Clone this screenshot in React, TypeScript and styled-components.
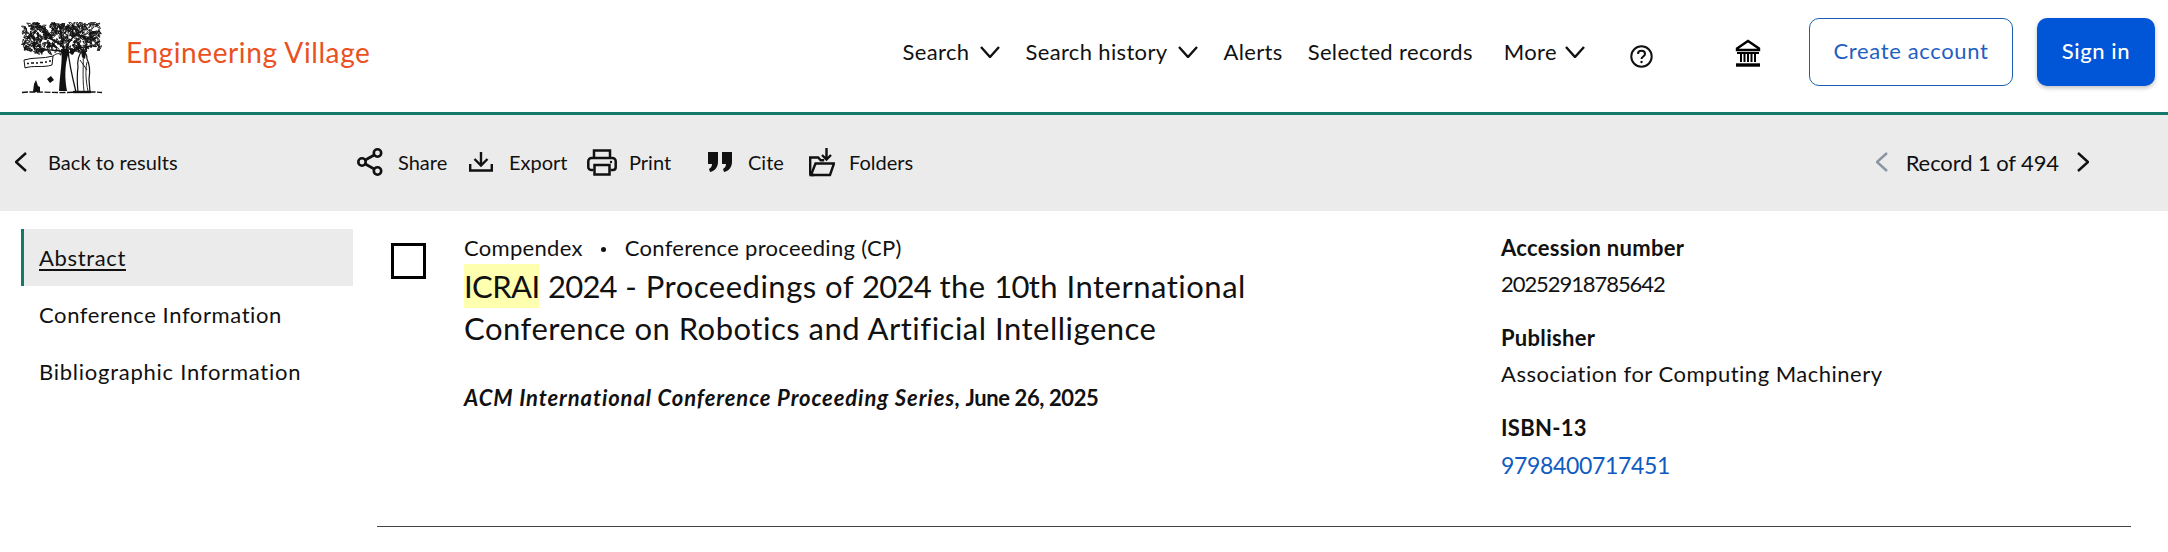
import React from "react";
import styled, { createGlobalStyle } from "styled-components";

const Global = createGlobalStyle`
  html, body { margin: 0; padding: 0; background: #fff; }
  body { font-family: "Lato", "Noto Sans", sans-serif; color: #111; }
  * { box-sizing: border-box; }
`;

const Page = styled.div`width: 2168px; height: 552px; overflow: hidden; background: #fff;`;

const Header = styled.header`
  height: 115px; border-bottom: 3px solid #14796b;
  display: flex; align-items: center; padding: 0 13px 0 21px;
`;
const LogoBox = styled.svg`width: 81px; height: 72px; flex: none; margin-top: 4px;`;
const Brand = styled.a`
  margin-left: 24px; font-size: 28px; letter-spacing: .6px; color: #e9511f; line-height: 1; margin-top: -9px;
`;
const Nav = styled.nav`margin-left: auto; height: 112px; display: flex; align-items: center;`;
const NavItem = styled.a<{ $ml: number; $gap?: number }>`
  margin-left: ${p => p.$ml}px; font-size: 22px; color: #111;
  letter-spacing: .35px; display: flex; align-items: center; gap: ${p => p.$gap ?? 11}px; line-height: 1; margin-top: -8px;
`;
const IconSlot = styled.span<{ $ml: number; $mt?: number }>`
  margin-left: ${p => p.$ml}px; margin-top: ${p => p.$mt ?? 0}px; display: flex;
`;
const Outline = styled.a`
  margin-left: 48px; width: 204px; height: 68px; margin-top: -9px; border: 1px solid #1b5fb5; border-radius: 10px;
  display: flex; align-items: center; justify-content: center; color: #1f5fc0;
  font-size: 22px; letter-spacing: .65px; padding-bottom: 3px;
`;
const Solid = styled.a`
  margin-left: 24px; width: 118px; height: 68px; margin-top: -9px; border-radius: 10px; background: #0056d6; color: #fff;
  box-shadow: 0 2px 4px rgba(0,0,0,.25);
  display: flex; align-items: center; justify-content: center; font-size: 22px; font-weight: 500; letter-spacing: .6px; padding-bottom: 3px;
`;

const Toolbar = styled.div`
  height: 96px; background: #ebebeb; display: flex; align-items: center; padding: 0 79px 2px 15px;
`;
const Back = styled.a`
  display: flex; align-items: center; gap: 21px; font-size: 20px; letter-spacing: .05px; width: 342px; flex: none;
`;
const Tool = styled.a<{ $w: number; $gap: number }>`
  display: flex; align-items: center; gap: ${p => p.$gap}px; width: ${p => p.$w}px; flex: none;
  font-size: 20px; letter-spacing: 0;
`;
const Pager = styled.div`
  margin-left: auto; display: flex; align-items: center; gap: 18px; font-size: 22px; letter-spacing: -.1px;
`;

const Main = styled.main`display: flex; align-items: flex-start; padding: 18px 0 0 21px;`;
const Side = styled.aside`width: 332px; flex: none; display: flex; flex-direction: column;`;
const SideItem = styled.a<{ $active?: boolean; $track: number }>`
  height: 57px; display: flex; align-items: center; padding-left: 15px;
  border-left: 3px solid ${p => (p.$active ? "#14796b" : "transparent")};
  background: ${p => (p.$active ? "#ebebeb" : "transparent")};
  font-size: 22px; letter-spacing: ${p => p.$track}px; color: #111;
  text-decoration: ${p => (p.$active ? "underline" : "none")};
  text-underline-offset: 3px; text-decoration-thickness: 2px;
`;
const Content = styled.section`margin-left: 24px; width: 1754px; border-bottom: 1px solid #444; height: 298px;`;
const Record = styled.div`display: flex; padding-left: 14px;`;
const Check = styled.span`
  width: 35px; height: 36px; border: 3px solid #000; flex: none; margin-top: 14px;
`;
const Middle = styled.div`margin-left: 38px; width: 1037px; flex: none;`;
const Meta = styled.div`
  font-size: 22px; letter-spacing: .3px; line-height: 26px; margin-top: 6px; display: flex; align-items: center;
`;
const Dot = styled.span`width: 5px; height: 5px; background: #111; border-radius: 50%; margin: 2px 19px 0 18px;`;
const Title = styled.h1`
  margin: 4px 0 0; font-weight: 400; font-size: 31px; line-height: 42px; letter-spacing: .5px; max-width: 800px;
`;
const Mark = styled.mark`background: #ffffb0; color: inherit; padding: 3px 0; letter-spacing: -.6px;`;
const Num = styled.span`letter-spacing: -.75px;`;
const Source = styled.p`margin: 35px 0 0; font-size: 22px; font-weight: 700; line-height: 28px; letter-spacing: -.4px;`;
const SourceName = styled.em`font-style: italic; letter-spacing: .9px;`;
const Facts = styled.dl`margin: 6px 0 0; width: 640px;`;
const Term = styled.dt`font-size: 22px; font-weight: 700; line-height: 26px; letter-spacing: .3px;`;
const Value = styled.dd<{ $link?: boolean; $track: number }>`
  margin: ${p => (p.$link ? 11 : 10)}px 0 28px; line-height: 26px; letter-spacing: ${p => p.$track}px;
  font-size: ${p => (p.$link ? 23 : 22)}px; color: ${p => (p.$link ? "#0f5bbf" : "#111")};
`;

type IP = { w: number; h: number; c?: string; sw?: number };
const Chevron = ({ w, h, dir, c = "#111", sw = 2.4 }: IP & { dir: "l" | "r" | "d" }) => {
  const pts = dir === "l" ? `${w - 1},1 1,${h / 2} ${w - 1},${h - 1}` : dir === "r" ? `1,1 ${w - 1},${h / 2} 1,${h - 1}` : `1,1 ${w / 2},${h - 1} ${w - 1},1`;
  return <svg width={w} height={h} viewBox={`0 0 ${w} ${h}`}><polyline points={pts} fill="none" stroke={c} strokeWidth={sw} /></svg>;
};

function rng(seed: number) { let s = seed; return () => (s = (s * 16807) % 2147483647) / 2147483647; }
const leaves = (() => {
  const r = rng(90210); const out: string[] = [];
  const f = (n: number) => n.toFixed(1);
  for (let i = 0; i < 340; i++) {
    const x = 2 + r() * 77, y = 1 + r() * 30;
    const nx = (x - 41) / 40, ny = (y - 15) / 16;
    if (nx * nx * nx * nx + ny * ny * ny * ny > 1) continue;
    const a = r() * 6.28, l = 1.6 + r() * 1.8;
    const dx = Math.cos(a) * l, dy = Math.sin(a) * l;
    out.push(`M${f(x - dx)} ${f(y - dy)}Q${f(x + dy * .7)} ${f(y - dx * .7)} ${f(x + dx)} ${f(y + dy)}Q${f(x - dy * .7)} ${f(y + dx * .7)} ${f(x - dx)} ${f(y - dy)}Z`);
  }
  return out.join("");
})();

const Logo = () => (
  <LogoBox viewBox="0 0 81 72">
    <path d={leaves} fill="#fff" stroke="#111" strokeWidth=".9" />
    <path d="M44 30C42 22 34 18 24 15M45 30C46 20 52 14 62 8M46 32C52 27 60 25 70 24M43 28C41 18 40 10 38 3M44 30C36 28 28 28 16 27" fill="none" stroke="#111" strokeWidth="1.4" />
    <path d="M40 27C42 38 39 50 38 69L46 69C44 58 43 44 48 30L46 27Z" fill="#111" />
    <path d="M3 38C12 35 22 37 32 34L31 43C22 46 12 43 4 46Z" fill="#fff" stroke="#111" strokeWidth="1" />
    <path d="M6 41.500h2M10 41h3M15 41h2M19 40.500h3M24 40h2M28 39h2" stroke="#111" strokeWidth="1.300" />
    <path d="M32 34C36 31 38 31 40 33" stroke="#111" strokeWidth="1" fill="none" />
    <path d="M47 28C48 40 52 58 55 70" stroke="#111" strokeWidth="1.300" fill="none" />
    <path d="M49 27c3-2 5 1 4 4s-4 2-4-1z" fill="#111" />
    <path d="M61 29c4 1 5 4 5 8 3 6 3 14 2 20l1 13H57c-1-10-1-18 0-25-1-6 1-13 4-16z" fill="#fff" stroke="#111" strokeWidth="1.200" />
    <path d="M62 33c1 8-1 20 1 36M66 40c-2 8-1 20 1 29M59 38l7 10" stroke="#111" strokeWidth=".9" fill="none" />
    <path d="M60 29c2-2 5-1 5 2l-1 6-3-2z" fill="#111" />
    <path d="M12 70l1-8 2-4 2 6 2 1 0 5zM26 57l4-3 3 4-4 3z" fill="#111" />
    <path d="M1 70.500C15 69 30 71 45 70.500S70 69.500 81 70.500" stroke="#111" strokeWidth="1.400" fill="none" strokeDasharray="6 1.500" />
    <path d="M52 70h18" stroke="#111" strokeWidth="2.400" />
  </LogoBox>
);

const Help = () => (
  <svg width="23" height="23" viewBox="0 0 23 23" fill="none" stroke="#111" strokeWidth="2">
    <circle cx="11.500" cy="11.500" r="10.200" />
    <path d="M8 9c0-2 1.500-3.200 3.500-3.200S15 7 15 9c0 2.500-3.500 2.500-3.500 5" strokeWidth="2" />
    <circle cx="11.500" cy="17" r="1.200" fill="#111" stroke="none" />
  </svg>
);
const Bank = () => (
  <svg width="26" height="28" viewBox="0 0 26 28" fill="none" stroke="#000" strokeWidth="2.400">
    <path d="M2 9.500 13 2l11 7.500v1.500H2z" />
    <path d="M2 14h22M6 14v9M13 14v9M20 14v9M9.500 14v9M16.500 14v9" strokeWidth="2" />
    <path d="M1 26h24" strokeWidth="3.400" />
  </svg>
);
const Share = () => (
  <svg width="26" height="28" viewBox="0 0 26 28" fill="none" stroke="#111" strokeWidth="2.600">
    <circle cx="20.500" cy="5" r="3.700" /><circle cx="20.500" cy="23" r="3.700" /><circle cx="5" cy="14" r="3.700" />
    <path d="M8.300 12 17.200 7M8.300 16l8.900 5" />
  </svg>
);
const Export = () => (
  <svg width="24" height="20" viewBox="0 0 24 20" fill="none" stroke="#111" strokeWidth="2.400">
    <path d="M12 0v13M5.500 7l6.500 6.500L18.500 7" /><path d="M1.200 12v6.500h21.600V12" />
  </svg>
);
const Print = () => (
  <svg width="30" height="27" viewBox="0 0 30 27" fill="none" stroke="#111" strokeWidth="2.500">
    <path d="M7 9V1.500h16V9" />
    <path d="M6.500 21H4a2.700 2.700 0 0 1-2.700-2.700v-6A3.300 3.300 0 0 1 4.600 9h20.800a3.300 3.300 0 0 1 3.300 3.300v6A2.700 2.700 0 0 1 26 21h-2.500" />
    <path d="M7.500 16h15v9.500h-15z" />
    <circle cx="24" cy="13" r="1.200" fill="#111" stroke="none" />
  </svg>
);
const Cite = () => (
  <svg width="24" height="20" viewBox="0 0 24 20" fill="#111">
    <path d="M0 0h10v10c0 5-3 9-8 10l-1-3c2-1 3-3 3-5H0zM14 0h10v10c0 5-3 9-8 10l-1-3c2-1 3-3 3-5h-4z" />
  </svg>
);
const Folders = () => (
  <svg width="26" height="29" viewBox="0 0 26 29" fill="none" stroke="#111" strokeWidth="2.400">
    <path d="M5 27H2.500A1.300 1.300 0 0 1 1.200 25.700V9.500h8l2.500 2.800h3.500" />
    <path d="M2 27 6.500 15.500H25L21 27z" />
    <path d="M17.500 0v11M13 7l4.500 4.500L22 7" />
  </svg>
);

export default function App() {
  return (
    <Page>
      <Global />
      <Header>
        <Logo />
        <Brand>Engineering Village</Brand>
        <Nav>
          <NavItem $ml={0}>Search <Chevron w={20} h={12} dir="d" /></NavItem>
          <NavItem $ml={25}>Search history <Chevron w={20} h={12} dir="d" /></NavItem>
          <NavItem $ml={25}>Alerts</NavItem>
          <NavItem $ml={25}>Selected records</NavItem>
          <NavItem $ml={31} $gap={8}>More <Chevron w={20} h={12} dir="d" /></NavItem>
          <IconSlot $ml={45}><Help /></IconSlot>
          <IconSlot $ml={82} $mt={-6}><Bank /></IconSlot>
          <Outline>Create account</Outline>
          <Solid>Sign in</Solid>
        </Nav>
      </Header>
      <Toolbar>
        <Back><Chevron w={12} h={20} dir="l" />Back to results</Back>
        <Tool $w={112} $gap={15}><Share />Share</Tool>
        <Tool $w={118} $gap={16}><Export />Export</Tool>
        <Tool $w={121} $gap={12}><Print />Print</Tool>
        <Tool $w={101} $gap={16}><Cite />Cite</Tool>
        <Tool $w={110} $gap={14}><Folders />Folders</Tool>
        <Pager>
          <Chevron w={12} h={20} dir="l" c="#8a94a3" />
          Record 1 of 494
          <Chevron w={12} h={20} dir="r" />
        </Pager>
      </Toolbar>
      <Main>
        <Side>
          <SideItem $active $track={.65}>Abstract</SideItem>
          <SideItem $track={.6}>Conference Information</SideItem>
          <SideItem $track={.75}>Bibliographic Information</SideItem>
        </Side>
        <Content>
          <Record>
            <Check />
            <Middle>
              <Meta>Compendex<Dot />Conference proceeding (CP)</Meta>
              <Title><Mark>ICRAI</Mark> <Num>2024</Num> - Proceedings of <Num>2024</Num> the <Num>10</Num>th International Conference on Robotics and Artificial Intelligence</Title>
              <Source><SourceName>ACM International Conference Proceeding Series,</SourceName> June 26, 2025</Source>
            </Middle>
            <Facts>
              <Term>Accession number</Term>
              <Value $track={-1.07}>20252918785642</Value>
              <Term>Publisher</Term>
              <Value $track={.5}>Association for Computing Machinery</Value>
              <Term>ISBN-13</Term>
              <Value $link $track={-.35}>9798400717451</Value>
            </Facts>
          </Record>
        </Content>
      </Main>
    </Page>
  );
}
